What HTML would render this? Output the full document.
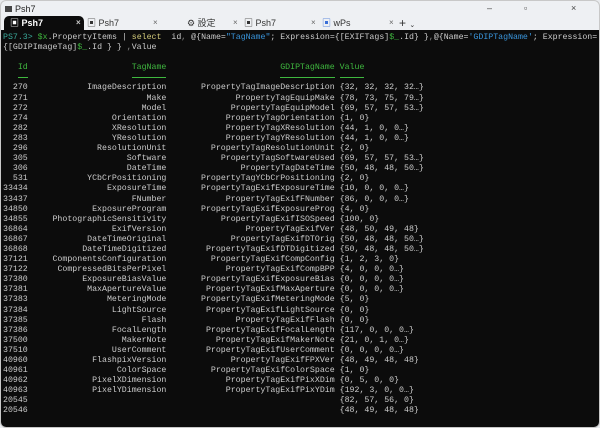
<!DOCTYPE html>
<html><head><meta charset="utf-8"><style>
*{margin:0;padding:0;box-sizing:border-box}
html,body{width:600px;height:428px;overflow:hidden;background:#e9ebee}
.win{position:absolute;left:0;top:0;width:600px;height:428px;background:#eef0f3;border:1px solid #c8c8c8;border-radius:6px;overflow:hidden;font-family:"Liberation Sans","Noto Sans CJK JP",sans-serif}
.title{position:absolute;left:4px;top:2px;font-size:9px;color:#222;height:12px;line-height:12px}
.title i{display:inline-block;width:7px;height:6px;background:#444;margin-right:3px;vertical-align:0}
.ctl{position:absolute;top:2px;font-size:9px;color:#444}
.tab{position:absolute;top:15px;height:14px;font-size:9px;line-height:14px;color:#333}
.tab .x{position:absolute;font-size:8px;color:#666}
.active{left:3px;width:80px;background:#0c0c0c;color:#fff;border-radius:5px 5px 0 0;padding-left:6px;font-weight:bold}
.term{position:absolute;left:0;top:29px;width:600px;height:399px;background:#0c0c0c;border-radius:0 0 6px 6px}
pre{position:absolute;left:2px;top:3px;font-family:"Liberation Mono",monospace;font-size:8.25px;line-height:10.1px;color:#cccccc;white-space:pre}
.r{display:inline-block;text-align:right}
.a{width:5ch}.b{width:27ch}.c{width:33ch}
.g{color:#3fb83f}.t{color:#3aa99a}.y{color:#d2ca7a}.bl{color:#3a96dd}.gr{color:#8a8a8a}
.u{display:inline-block;height:1px;background:#3fb83f;vertical-align:middle}
</style></head><body><div class="win">
<div class="title"><i></i>Psh7</div>
<div class="ctl" style="left:486px">–</div><div class="ctl" style="left:523px">▫</div><div class="ctl" style="left:570px">×</div>
<div class="tab active">▣ Psh7<span class="x" style="left:72px;color:#ccc">×</span></div>
<div class="tab" style="left:86px;width:80px">▣ Psh7<span class="x" style="left:66px">×</span></div>
<div class="tab" style="left:186px;width:60px">⚙ 設定<span class="x" style="left:46px">×</span></div>
<div class="tab" style="left:243px;width:80px">▣ Psh7<span class="x" style="left:67px">×</span></div>
<div class="tab" style="left:321px;width:80px"><span style="color:#3a6fd8">▣</span> wPs<span class="x" style="left:67px">×</span></div>
<div class="tab" style="left:398px;font-size:12px">+ <span style="font-size:7px">⌄</span></div>
<div class="term"><pre><span class="t">PS7.3&gt;</span> <span class="g">$x</span>.PropertyItems | <span class="y">select</span>  id<span class="gr">,</span> @{Name=<span class="bl">"TagName"</span>; Expression={[EXIFTags]<span class="g">$_</span>.Id} }<span class="gr">,</span>@{Name=<span class="bl">'GDIPTagName'</span>; Expression=
{[GDIPImageTag]<span class="g">$_</span>.Id } } <span class="gr">,</span>Value

<span class="r a g">Id</span> <span class="r b g">TagName</span> <span class="r c g">GDIPTagName</span> <span class="g">Value</span>
<span class="r a"><span class="u" style="width:2ch"></span></span> <span class="r b"><span class="u" style="width:7ch"></span></span> <span class="r c"><span class="u" style="width:11ch"></span></span> <span class="u" style="width:5ch"></span>
<span class="r a">270</span> <span class="r b">ImageDescription</span> <span class="r c">PropertyTagImageDescription</span> {32, 32, 32, 32…}
<span class="r a">271</span> <span class="r b">Make</span> <span class="r c">PropertyTagEquipMake</span> {78, 73, 75, 79…}
<span class="r a">272</span> <span class="r b">Model</span> <span class="r c">PropertyTagEquipModel</span> {69, 57, 57, 53…}
<span class="r a">274</span> <span class="r b">Orientation</span> <span class="r c">PropertyTagOrientation</span> {1, 0}
<span class="r a">282</span> <span class="r b">XResolution</span> <span class="r c">PropertyTagXResolution</span> {44, 1, 0, 0…}
<span class="r a">283</span> <span class="r b">YResolution</span> <span class="r c">PropertyTagYResolution</span> {44, 1, 0, 0…}
<span class="r a">296</span> <span class="r b">ResolutionUnit</span> <span class="r c">PropertyTagResolutionUnit</span> {2, 0}
<span class="r a">305</span> <span class="r b">Software</span> <span class="r c">PropertyTagSoftwareUsed</span> {69, 57, 57, 53…}
<span class="r a">306</span> <span class="r b">DateTime</span> <span class="r c">PropertyTagDateTime</span> {50, 48, 48, 50…}
<span class="r a">531</span> <span class="r b">YCbCrPositioning</span> <span class="r c">PropertyTagYCbCrPositioning</span> {2, 0}
<span class="r a">33434</span> <span class="r b">ExposureTime</span> <span class="r c">PropertyTagExifExposureTime</span> {10, 0, 0, 0…}
<span class="r a">33437</span> <span class="r b">FNumber</span> <span class="r c">PropertyTagExifFNumber</span> {86, 0, 0, 0…}
<span class="r a">34850</span> <span class="r b">ExposureProgram</span> <span class="r c">PropertyTagExifExposureProg</span> {4, 0}
<span class="r a">34855</span> <span class="r b">PhotographicSensitivity</span> <span class="r c">PropertyTagExifISOSpeed</span> {100, 0}
<span class="r a">36864</span> <span class="r b">ExifVersion</span> <span class="r c">PropertyTagExifVer</span> {48, 50, 49, 48}
<span class="r a">36867</span> <span class="r b">DateTimeOriginal</span> <span class="r c">PropertyTagExifDTOrig</span> {50, 48, 48, 50…}
<span class="r a">36868</span> <span class="r b">DateTimeDigitized</span> <span class="r c">PropertyTagExifDTDigitized</span> {50, 48, 48, 50…}
<span class="r a">37121</span> <span class="r b">ComponentsConfiguration</span> <span class="r c">PropertyTagExifCompConfig</span> {1, 2, 3, 0}
<span class="r a">37122</span> <span class="r b">CompressedBitsPerPixel</span> <span class="r c">PropertyTagExifCompBPP</span> {4, 0, 0, 0…}
<span class="r a">37380</span> <span class="r b">ExposureBiasValue</span> <span class="r c">PropertyTagExifExposureBias</span> {0, 0, 0, 0…}
<span class="r a">37381</span> <span class="r b">MaxApertureValue</span> <span class="r c">PropertyTagExifMaxAperture</span> {0, 0, 0, 0…}
<span class="r a">37383</span> <span class="r b">MeteringMode</span> <span class="r c">PropertyTagExifMeteringMode</span> {5, 0}
<span class="r a">37384</span> <span class="r b">LightSource</span> <span class="r c">PropertyTagExifLightSource</span> {0, 0}
<span class="r a">37385</span> <span class="r b">Flash</span> <span class="r c">PropertyTagExifFlash</span> {0, 0}
<span class="r a">37386</span> <span class="r b">FocalLength</span> <span class="r c">PropertyTagExifFocalLength</span> {117, 0, 0, 0…}
<span class="r a">37500</span> <span class="r b">MakerNote</span> <span class="r c">PropertyTagExifMakerNote</span> {21, 0, 1, 0…}
<span class="r a">37510</span> <span class="r b">UserComment</span> <span class="r c">PropertyTagExifUserComment</span> {0, 0, 0, 0…}
<span class="r a">40960</span> <span class="r b">FlashpixVersion</span> <span class="r c">PropertyTagExifFPXVer</span> {48, 49, 48, 48}
<span class="r a">40961</span> <span class="r b">ColorSpace</span> <span class="r c">PropertyTagExifColorSpace</span> {1, 0}
<span class="r a">40962</span> <span class="r b">PixelXDimension</span> <span class="r c">PropertyTagExifPixXDim</span> {0, 5, 0, 0}
<span class="r a">40963</span> <span class="r b">PixelYDimension</span> <span class="r c">PropertyTagExifPixYDim</span> {192, 3, 0, 0…}
<span class="r a">20545</span> <span class="r b"></span> <span class="r c"></span> {82, 57, 56, 0}
<span class="r a">20546</span> <span class="r b"></span> <span class="r c"></span> {48, 49, 48, 48}</pre></div>
</div></body></html>
